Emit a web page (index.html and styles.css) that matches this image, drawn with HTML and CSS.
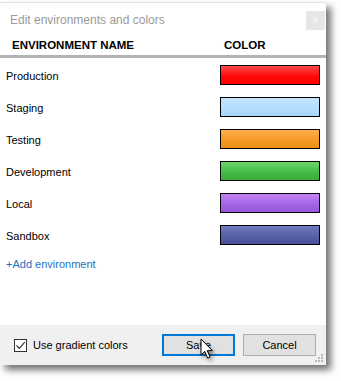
FILE: index.html
```html
<!DOCTYPE html>
<html>
<head>
<meta charset="utf-8">
<link rel="stylesheet" href="styles.css">
</head>
<body>
<div class="dialog">
  <div class="titlebar">
    <span class="title">Edit environments and colors</span>
    <span class="close">×</span>
  </div>
  <div class="head">
    <span class="col-name">ENVIRONMENT NAME</span>
    <span class="col-color">COLOR</span>
  </div>
  <div class="rows">
    <div class="row"><span>Production</span><span class="swatch red"></span></div>
    <div class="row"><span>Staging</span><span class="swatch blue"></span></div>
    <div class="row"><span>Testing</span><span class="swatch orange"></span></div>
    <div class="row"><span>Development</span><span class="swatch green"></span></div>
    <div class="row"><span>Local</span><span class="swatch purple"></span></div>
    <div class="row"><span>Sandbox</span><span class="swatch navy"></span></div>
  </div>
  <div class="add">+Add environment</div>
  <div class="spacer"></div>
  <div class="footer">
    <label class="check"><span class="box"><svg width="11" height="11" viewBox="0 0 11 11"><path d="M1.5 5.5 L4.3 8.3 L9.8 2.2" fill="none" stroke="#333" stroke-width="1.2"/></svg></span>Use gradient colors</label>
    <div class="buttons">
      <span class="btn primary">Save</span>
      <span class="btn">Cancel</span>
    </div>
    <svg class="grip" width="8" height="8" viewBox="0 0 8 8">
      <rect x="6" y="0" width="2" height="2" fill="#b8b8b8"/>
      <rect x="3" y="3" width="2" height="2" fill="#b8b8b8"/>
      <rect x="6" y="3" width="2" height="2" fill="#b8b8b8"/>
      <rect x="0" y="6" width="2" height="2" fill="#b8b8b8"/>
      <rect x="3" y="6" width="2" height="2" fill="#b8b8b8"/>
      <rect x="6" y="6" width="2" height="2" fill="#b8b8b8"/>
    </svg>
    <svg class="cursor" width="14" height="22" viewBox="0 0 14 22">
      <path d="M1 1 L1 17 L4.8 13.4 L7.6 20 L10 19 L7.3 12.6 L12.4 12.6 Z" fill="#fff" stroke="#000" stroke-width="1" stroke-linejoin="round"/>
    </svg>
  </div>
</div>
</body>
</html>
```
FILE: styles.css
```css
* { box-sizing: border-box; }
html, body { margin: 0; padding: 0; background: #fff; }
body {
  font-family: "Liberation Sans", Arial, sans-serif;
  font-size: 11px;
  color: #000;
  width: 341px;
  height: 381px;
  overflow: hidden;
}
.dialog {
  width: 326px;
  height: 363px;
  margin-top: 2px;
  border-top: 1px solid #e2e2e2;
  background: #fff;
  box-shadow: 5px 5px 7px rgba(0,0,0,0.55);
  display: flex;
  flex-direction: column;
  position: relative;
}
.titlebar {
  height: 34px;
  display: flex;
  align-items: flex-start;
  justify-content: space-between;
  padding-left: 10px;
}
.title {
  color: #9a9a9a;
  font-size: 12px;
  margin-top: 10px;
}
.close {
  width: 19px;
  height: 19px;
  margin-top: 8px;
  margin-right: 1px;
  background: #e6e6e6;
  color: #f8f8f8;
  font-size: 12px;
  line-height: 19px;
  text-align: center;
}
.head {
  display: flex;
  font-weight: bold;
  font-size: 11.5px;
  padding-left: 12px;
  padding-top: 2px;
  border-bottom: 3px solid #b4b4b4;
  box-sizing: content-box;
  height: 16px;
}
.col-name { width: 212px; }
.rows {
  display: flex;
  flex-direction: column;
  padding-top: 7px;
  gap: 12px;
}
.row {
  height: 20px;
  display: flex;
  align-items: center;
  justify-content: space-between;
  padding-left: 6px;
  padding-right: 6px;
  padding-top: 1px;
}
.swatch {
  width: 100px;
  height: 20px;
  border: 1px solid #000;
  margin-top: -1px;
}
.red { background: linear-gradient(#ff4a4a, #ff0a0a 55%, #ff0000); }
.blue { background: linear-gradient(#c4e4ff, #a8d6fb); }
.orange { background: linear-gradient(#ffb04c, #f59a28 55%, #ee8e18); }
.green { background: linear-gradient(#6ad66a, #48bb48 55%, #3aab3a); }
.purple { background: linear-gradient(#c284f4, #a466e6 55%, #9656da); }
.navy { background: linear-gradient(#747cc0, #5860a6 55%, #48509a); }
.add {
  color: #1f6fbf;
  padding-left: 6px;
  margin-top: 13px;
}
.spacer { flex: 1; }
.footer {
  height: 40px;
  background: #f0f0f0;
  display: flex;
  align-items: center;
  justify-content: space-between;
  padding-left: 14px;
  padding-right: 10px;
  position: relative;
}
.check {
  display: flex;
  align-items: center;
  gap: 6px;
}
.box {
  width: 13px;
  height: 13px;
  border: 1px solid #333;
  background: #fff;
  display: flex;
  align-items: center;
  justify-content: center;
}
.buttons {
  display: flex;
  gap: 8px;
}
.btn {
  width: 73px;
  height: 22px;
  background: #e1e1e1;
  border: 1px solid #adadad;
  display: flex;
  align-items: center;
  justify-content: center;
}
.primary {
  border: 2px solid #0078d7;
}
.grip {
  position: absolute;
  right: 3px;
  bottom: 3px;
}
.cursor {
  position: absolute;
  left: 200px;
  top: 13px;
  filter: drop-shadow(2px 3px 2px rgba(0,0,0,0.45));
}
```
